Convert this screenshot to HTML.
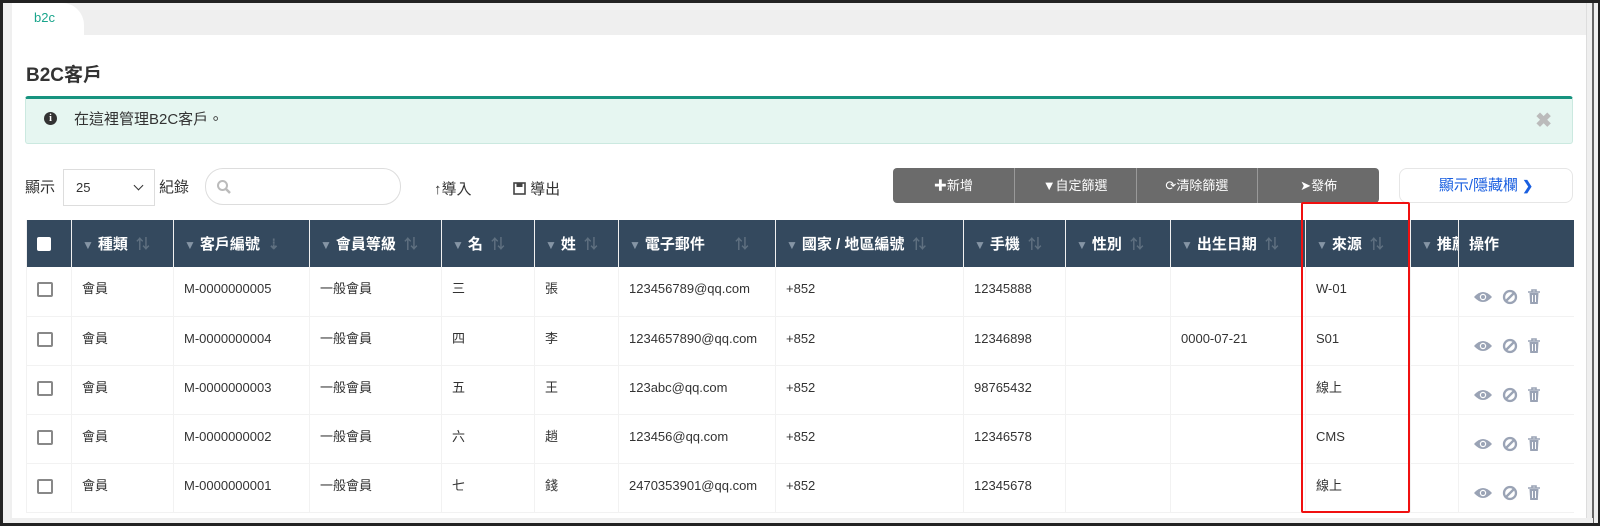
<!DOCTYPE html>
<html><head><meta charset="utf-8"><style>
*{box-sizing:border-box;margin:0;padding:0}
body{width:1600px;height:526px;overflow:hidden;background:#fff;font-family:"Liberation Sans","Noto Sans CJK TC",sans-serif;color:#333;position:relative}
.frame{position:absolute;left:0;top:0;width:1600px;height:526px;border:3px solid #222;border-right-width:2px}
.lstrip{position:absolute;left:3px;top:3px;width:9px;height:520px;background:#efefef}
.rstrip{position:absolute;left:1586px;top:3px;width:12px;height:520px;background:#efefef;border-left:1px solid #ddd}
.rline{position:absolute;left:1592px;top:3px;width:2px;height:520px;background:#666}
.bstrip{position:absolute;left:3px;top:518px;width:1590px;height:5px;background:#efefef}
.tabbar{position:absolute;left:12px;top:3px;width:1574px;height:32px;background:#efefef}
.tab{position:absolute;left:12px;top:3px;width:72px;height:33px;background:#fff;border-top-right-radius:22px}
.tab span{position:absolute;left:22px;top:7px;font-size:13px;color:#1aa58c}
h1{position:absolute;left:26px;top:60px;font-size:19px;font-weight:bold;color:#333}
.alert{position:absolute;left:25px;top:96px;width:1548px;height:48px;background:#e6f6f1;border:1px solid #cbe9e0;border-top:3px solid #17937f;border-radius:3px}
.alert .i{position:absolute;left:18px;top:13px;width:13px;height:13px;border-radius:50%;background:#333;color:#fff;font-size:10px;font-weight:bold;text-align:center;line-height:13px;font-family:"Liberation Serif",serif}
.alert .t{position:absolute;left:48px;top:9px;font-size:15px;color:#333}
.alert .x{position:absolute;right:20px;top:9px;font-size:20px;color:#bbb;font-weight:bold}
.ctl{position:absolute;font-size:15px;color:#333}
.sel{position:absolute;left:63px;top:169px;width:92px;height:37px;border:1px solid #ddd;font-size:13px;padding:10px 12px}
.sel:after{content:"";position:absolute;right:12px;top:12px;width:6px;height:6px;border-right:1.5px solid #333;border-bottom:1.5px solid #333;transform:rotate(45deg)}
.search{position:absolute;left:205px;top:168px;width:196px;height:37px;border:1px solid #ddd;border-radius:18px}
.btns{position:absolute;left:893px;top:168px;width:486px;height:35px;background:#6b6b6b;border-radius:4px;display:flex;color:#fff;font-size:13px}
.btns div{flex:1;text-align:center;line-height:35px;border-left:1px solid #999}
.btns div:first-child{border-left:none}
.sh{position:absolute;left:1399px;top:168px;width:174px;height:35px;border:1px solid #e6e6e6;border-radius:8px;color:#1a5fe0;font-size:15px;text-align:center;line-height:33px}
table{position:absolute;left:26px;top:220px;border-collapse:collapse;table-layout:fixed;width:1547px}
th{background:#34495e;color:#fff;height:47px;text-align:left;font-size:15px;font-weight:bold;border-left:1px solid #f0f0f0;padding-left:10px;white-space:nowrap;overflow:hidden}
th .f{color:#8595a5;font-size:12px;margin-right:4px}
th .s{color:#5f7080;margin-left:8px;font-size:14px}
td{height:49px;font-size:13px;line-height:18px;border-left:1px solid #f2f2f2;border-bottom:1px solid #f2f2f2;padding:0 0 4px 10px;vertical-align:middle;white-space:nowrap}
.cb{display:inline-block;width:16px;height:15px;border:2px solid #888;border-radius:2px;vertical-align:middle}
th .cbw{display:inline-block;width:14px;height:14px;background:#fff;border-radius:2px;vertical-align:middle}
td.ops{padding:10px 0 0 14px}
.ops svg{vertical-align:middle;margin-right:9px}
.red{position:absolute;left:1301px;top:202px;width:109px;height:311px;border:2px solid #f01010;border-radius:2px}
</style></head><body>
<div class="tabbar"></div><div class="tab"><span>b2c</span></div>
<div class="lstrip"></div><div class="rstrip"></div><div class="rline"></div><div class="bstrip"></div>
<h1>B2C客戶</h1>
<div class="alert"><div class="i">i</div><div class="t">在這裡管理B2C客戶。</div><div class="x">✖</div></div>
<div class="ctl" style="left:25px;top:176px">顯示</div>
<div class="sel">25</div>
<div class="ctl" style="left:159px;top:176px">紀錄</div>
<div class="search"><svg style="position:absolute;left:10px;top:10px" width="16" height="16" viewBox="0 0 16 16"><circle cx="6.5" cy="6.5" r="4.5" fill="none" stroke="#bbb" stroke-width="2"/><path d="M10 10l4 4" stroke="#bbb" stroke-width="2.5"/></svg></div>
<div class="ctl" style="left:434px;top:178px">↑導入</div>
<div class="ctl" style="left:513px;top:178px"><svg width="13" height="13" viewBox="0 0 13 13" style="vertical-align:-1px"><rect x="1" y="1" width="11" height="11" fill="none" stroke="#444" stroke-width="1.6"/><rect x="3.5" y="1" width="6" height="4" fill="#444"/></svg> 導出</div>
<div class="btns"><div>✚新增</div><div>▼自定篩選</div><div>⟳清除篩選</div><div>➤發佈</div></div>
<div class="sh">顯示/隱藏欄 <b style="font-size:13px">❯</b></div>
<table>
<colgroup><col style="width:45px"><col style="width:102px"><col style="width:136px"><col style="width:132px"><col style="width:93px"><col style="width:84px"><col style="width:157px"><col style="width:188px"><col style="width:102px"><col style="width:105px"><col style="width:135px"><col style="width:105px"><col style="width:48px"><col style="width:115px"></colgroup>
<tr><th><span class="cbw"></span></th><th><span class="f">▼</span>種類<span class="s">⇅</span></th><th><span class="f">▼</span>客戶編號<span class="s">⇣</span></th><th><span class="f">▼</span>會員等級<span class="s">⇅</span></th><th><span class="f">▼</span>名<span class="s">⇅</span></th><th><span class="f">▼</span>姓<span class="s">⇅</span></th><th><span class="f">▼</span>電子郵件<span class="s" style="margin-left:30px">⇅</span></th><th><span class="f">▼</span>國家 / 地區編號<span class="s">⇅</span></th><th><span class="f">▼</span>手機<span class="s">⇅</span></th><th><span class="f">▼</span>性別<span class="s">⇅</span></th><th><span class="f">▼</span>出生日期<span class="s">⇅</span></th><th><span class="f">▼</span>來源<span class="s">⇅</span></th><th><span class="f">▼</span>推薦</th><th>操作</th></tr>
<tr><td><span class="cb"></span></td><td>會員</td><td>M-0000000005</td><td>一般會員</td><td>三</td><td>張</td><td>123456789@qq.com</td><td>+852</td><td>12345888</td><td></td><td></td><td>W-01</td><td></td><td class="ops"><svg width="20" height="14" viewBox="0 0 20 14"><path d="M1 7Q10-3 19 7Q10 17 1 7Z" fill="#9aa3b5"/><circle cx="10" cy="7" r="3.2" fill="#fff"/><circle cx="10" cy="7" r="2" fill="#9aa3b5"/></svg><svg width="16" height="16" viewBox="0 0 16 16"><circle cx="8" cy="8" r="6" fill="none" stroke="#9aa3b5" stroke-width="2.3"/><path d="M4 12L12 4" stroke="#9aa3b5" stroke-width="2.3"/></svg><svg width="14" height="16" viewBox="0 0 14 16"><path d="M1 3h12M5 3V1h4v2" stroke="#9aa3b5" stroke-width="1.6" fill="none"/><path d="M2.5 4h9l-.7 11H3.2Z" fill="#9aa3b5"/><path d="M5.5 6v7M8.5 6v7" stroke="#fff" stroke-width="1"/></svg></td></tr>
<tr><td><span class="cb"></span></td><td>會員</td><td>M-0000000004</td><td>一般會員</td><td>四</td><td>李</td><td>1234657890@qq.com</td><td>+852</td><td>12346898</td><td></td><td>0000-07-21</td><td>S01</td><td></td><td class="ops"><svg width="20" height="14" viewBox="0 0 20 14"><path d="M1 7Q10-3 19 7Q10 17 1 7Z" fill="#9aa3b5"/><circle cx="10" cy="7" r="3.2" fill="#fff"/><circle cx="10" cy="7" r="2" fill="#9aa3b5"/></svg><svg width="16" height="16" viewBox="0 0 16 16"><circle cx="8" cy="8" r="6" fill="none" stroke="#9aa3b5" stroke-width="2.3"/><path d="M4 12L12 4" stroke="#9aa3b5" stroke-width="2.3"/></svg><svg width="14" height="16" viewBox="0 0 14 16"><path d="M1 3h12M5 3V1h4v2" stroke="#9aa3b5" stroke-width="1.6" fill="none"/><path d="M2.5 4h9l-.7 11H3.2Z" fill="#9aa3b5"/><path d="M5.5 6v7M8.5 6v7" stroke="#fff" stroke-width="1"/></svg></td></tr>
<tr><td><span class="cb"></span></td><td>會員</td><td>M-0000000003</td><td>一般會員</td><td>五</td><td>王</td><td>123abc@qq.com</td><td>+852</td><td>98765432</td><td></td><td></td><td>線上</td><td></td><td class="ops"><svg width="20" height="14" viewBox="0 0 20 14"><path d="M1 7Q10-3 19 7Q10 17 1 7Z" fill="#9aa3b5"/><circle cx="10" cy="7" r="3.2" fill="#fff"/><circle cx="10" cy="7" r="2" fill="#9aa3b5"/></svg><svg width="16" height="16" viewBox="0 0 16 16"><circle cx="8" cy="8" r="6" fill="none" stroke="#9aa3b5" stroke-width="2.3"/><path d="M4 12L12 4" stroke="#9aa3b5" stroke-width="2.3"/></svg><svg width="14" height="16" viewBox="0 0 14 16"><path d="M1 3h12M5 3V1h4v2" stroke="#9aa3b5" stroke-width="1.6" fill="none"/><path d="M2.5 4h9l-.7 11H3.2Z" fill="#9aa3b5"/><path d="M5.5 6v7M8.5 6v7" stroke="#fff" stroke-width="1"/></svg></td></tr>
<tr><td><span class="cb"></span></td><td>會員</td><td>M-0000000002</td><td>一般會員</td><td>六</td><td>趙</td><td>123456@qq.com</td><td>+852</td><td>12346578</td><td></td><td></td><td>CMS</td><td></td><td class="ops"><svg width="20" height="14" viewBox="0 0 20 14"><path d="M1 7Q10-3 19 7Q10 17 1 7Z" fill="#9aa3b5"/><circle cx="10" cy="7" r="3.2" fill="#fff"/><circle cx="10" cy="7" r="2" fill="#9aa3b5"/></svg><svg width="16" height="16" viewBox="0 0 16 16"><circle cx="8" cy="8" r="6" fill="none" stroke="#9aa3b5" stroke-width="2.3"/><path d="M4 12L12 4" stroke="#9aa3b5" stroke-width="2.3"/></svg><svg width="14" height="16" viewBox="0 0 14 16"><path d="M1 3h12M5 3V1h4v2" stroke="#9aa3b5" stroke-width="1.6" fill="none"/><path d="M2.5 4h9l-.7 11H3.2Z" fill="#9aa3b5"/><path d="M5.5 6v7M8.5 6v7" stroke="#fff" stroke-width="1"/></svg></td></tr>
<tr><td><span class="cb"></span></td><td>會員</td><td>M-0000000001</td><td>一般會員</td><td>七</td><td>錢</td><td>2470353901@qq.com</td><td>+852</td><td>12345678</td><td></td><td></td><td>線上</td><td></td><td class="ops"><svg width="20" height="14" viewBox="0 0 20 14"><path d="M1 7Q10-3 19 7Q10 17 1 7Z" fill="#9aa3b5"/><circle cx="10" cy="7" r="3.2" fill="#fff"/><circle cx="10" cy="7" r="2" fill="#9aa3b5"/></svg><svg width="16" height="16" viewBox="0 0 16 16"><circle cx="8" cy="8" r="6" fill="none" stroke="#9aa3b5" stroke-width="2.3"/><path d="M4 12L12 4" stroke="#9aa3b5" stroke-width="2.3"/></svg><svg width="14" height="16" viewBox="0 0 14 16"><path d="M1 3h12M5 3V1h4v2" stroke="#9aa3b5" stroke-width="1.6" fill="none"/><path d="M2.5 4h9l-.7 11H3.2Z" fill="#9aa3b5"/><path d="M5.5 6v7M8.5 6v7" stroke="#fff" stroke-width="1"/></svg></td></tr>
</table>
<div class="red"></div>
<div class="frame"></div>
</body></html>
